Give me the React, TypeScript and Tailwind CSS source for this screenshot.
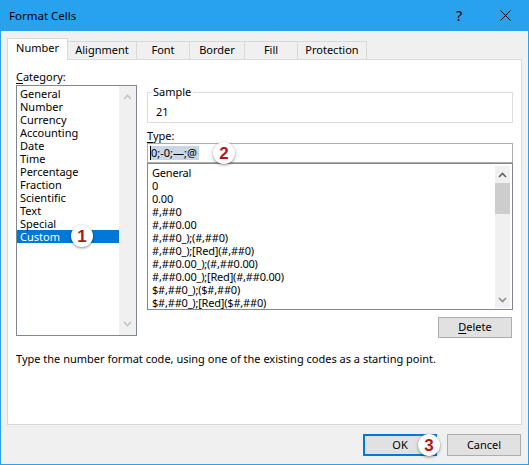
import React from "react";

const categories = [
  "General",
  "Number",
  "Currency",
  "Accounting",
  "Date",
  "Time",
  "Percentage",
  "Fraction",
  "Scientific",
  "Text",
  "Special",
  "Custom",
];

const formats = [
  "General",
  "0",
  "0.00",
  "#,##0",
  "#,##0.00",
  "#,##0_);(#,##0)",
  "#,##0_);[Red](#,##0)",
  "#,##0.00_);(#,##0.00)",
  "#,##0.00_);[Red](#,##0.00)",
  "$#,##0_);($#,##0)",
  "$#,##0_);[Red]($#,##0)",
];

const tabs = [
  { label: "Number", width: "w-[61px]" },
  { label: "Alignment", width: "w-[69px]" },
  { label: "Font", width: "w-[53px]" },
  { label: "Border", width: "w-[55px]" },
  { label: "Fill", width: "w-[53px]" },
  { label: "Protection", width: "w-[69px]" },
];

// Numbered callout drawn over the dialog
function Badge({ n, className }: { n: string; className: string }) {
  return (
    <div
      className={`absolute z-20 w-[22px] h-[22px] rounded-full bg-white shadow-[0_1px_3px_rgba(0,0,0,0.45)] flex items-center justify-center text-[#b0141c] font-bold text-[17px] leading-none font-['Liberation_Sans',sans-serif] ${className}`}
    >
      {n}
    </div>
  );
}

function Chevron({ up, color }: { up?: boolean; color: string }) {
  return (
    <svg width="9" height="6" viewBox="0 0 9 6">
      <polyline
        points={up ? "1,5 4.5,1.5 8,5" : "1,1 4.5,4.5 8,1"}
        fill="none"
        stroke={color}
        strokeWidth="1.6"
      />
    </svg>
  );
}

export default function App() {
  return (
    <div className="w-[529px] h-[465px] flex flex-col bg-[#f0f0f0] border-x border-b border-[#2a9fea] text-[11px] text-black font-['Noto_Sans',sans-serif] select-none">
      {/* Title bar */}
      <div className="h-[31px] shrink-0 bg-[#29a2ee] flex items-center">
        <span className="pl-[8px] flex-1 text-[11.5px]">Format Cells</span>
        <div className="w-[46px] h-full flex items-center justify-center text-[14px]">?</div>
        <div className="w-[46px] h-full flex items-center justify-center">
          <svg width="11" height="11" viewBox="0 0 11 11">
            <path d="M0.5 0.5 L10.5 10.5 M10.5 0.5 L0.5 10.5" stroke="#000" strokeWidth="1" />
          </svg>
        </div>
      </div>

      <div className="flex-1 flex flex-col px-[6px]">
        {/* Tabs */}
        <div className="mt-[7px] h-[22px] flex items-end relative z-10 -mb-px">
          {tabs.map((t, i) =>
            i === 0 ? (
              <div
                key={t.label}
                className={`${t.width} h-[22px] bg-white border border-b-0 border-[#d9d9d9] flex items-center justify-center pb-[2px]`}
              >
                {t.label}
              </div>
            ) : (
              <div
                key={t.label}
                className={`${t.width} h-[19px] bg-[#f0f0f0] border-t border-r border-b border-[#d9d9d9] flex items-center justify-center`}
              >
                {t.label}
              </div>
            )
          )}
        </div>

        {/* Tab page */}
        <div className="h-[366px] bg-white border border-[#d9d9d9] flex flex-col pt-[9px] pl-[8px] pr-[5px]">
          <div className="flex">
            {/* Category */}
            <div className="w-[121px] flex flex-col">
              <div className="h-[16px] leading-[16px]">
                <span className="underline underline-offset-2">C</span>ategory:
              </div>
              <div className="relative h-[251px] border border-[#828790] bg-white flex">
                <div className="flex-1 pt-[1px]">
                  {categories.map((c) => (
                    <div
                      key={c}
                      className={`h-[13px] leading-[13px] pl-[3px] ${
                        c === "Custom" ? "bg-[#0078d7] text-white" : ""
                      }`}
                    >
                      {c}
                    </div>
                  ))}
                </div>
                <div className="w-[17px] bg-[#f0f0f0] flex flex-col justify-between items-center py-[8px]">
                  <Chevron up color="#c4c4c4" />
                  <Chevron color="#c4c4c4" />
                </div>
                <Badge n="1" className="left-[54px] top-[139px]" />
              </div>
            </div>

            {/* Sample / Type */}
            <div className="ml-[10px] w-[366px] flex flex-col">
              <div className="relative mt-[23px] h-[31px] border border-[#dcdcdc] pl-[8px] pt-[11px] leading-[15px]">
                <span className="absolute -top-[9px] left-[3px] bg-white px-[2px] leading-[16px]">Sample</span>
                21
              </div>
              <div className="mt-[5px] leading-[15px]">
                <span className="underline underline-offset-2">T</span>ype:
              </div>
              <div className="relative h-[20px] border border-[#abadb3] flex items-center pl-[2px]">
                <span className="border-l border-black bg-[#c8d6e5] pr-[2px] leading-[14px]">0;-0;—;@</span>
                <Badge n="2" className="left-[65px] -top-[2px]" />
              </div>
              <div className="h-[147px] border border-[#828790] bg-white flex">
                <div className="flex-1 pt-[2px] pl-[4px] tracking-[-0.2px]">
                  {formats.map((f) => (
                    <div key={f} className="h-[13px] leading-[13px] whitespace-nowrap">
                      {f}
                    </div>
                  ))}
                </div>
                <div className="w-[15px] mt-[2px] mb-[1px] mr-[2px] bg-[#f0f0f0] flex flex-col">
                  <div className="h-[17px] flex items-center justify-center">
                    <Chevron up color="#606060" />
                  </div>
                  <div className="h-[31px] bg-[#cdcdcd]" />
                  <div className="flex-1" />
                  <div className="h-[17px] flex items-center justify-center">
                    <Chevron color="#8a8a8a" />
                  </div>
                </div>
              </div>
              <button className="mt-[7px] self-end mr-[1px] w-[74px] h-[21px] bg-[#e1e1e1] border border-[#adadad] flex items-center justify-center">
                <span className="underline underline-offset-2">D</span>elete
              </button>
            </div>
          </div>
          <div className="mt-[13px] leading-[15px]">
            Type the number format code, using one of the existing codes as a starting point.
          </div>
        </div>

        {/* Dialog buttons */}
        <div className="mt-[9px] flex justify-end gap-[10px] pr-[1px]">
          <button className="relative w-[74px] h-[22px] bg-[#e1e1e1] border-2 border-[#0078d7] flex items-center justify-center">
            OK
            <Badge n="3" className="left-[53px] -top-[2px]" />
          </button>
          <button className="w-[74px] h-[22px] bg-[#e1e1e1] border border-[#adadad] flex items-center justify-center">
            Cancel
          </button>
        </div>
      </div>
    </div>
  );
}
